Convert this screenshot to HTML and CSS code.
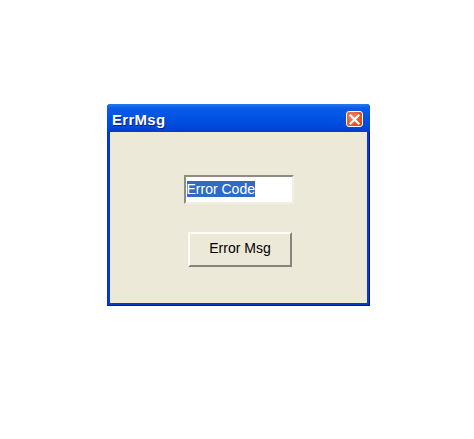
FILE: index.html
```html
<!DOCTYPE html>
<html lang="en">
<head>
  <meta charset="UTF-8">
  <meta name="viewport" content="width=device-width, initial-scale=1.0">
  <title>ErrMsg</title>
  <link rel="stylesheet" href="styles.css">
</head>
<body>
  <div class="window">
    <div class="titlebar">
      <span class="title">ErrMsg</span>
      <span class="close">
        <svg width="11" height="11" viewBox="0 0 11 11">
          <path d="M1.5 1.5 L9.5 9.5 M9.5 1.5 L1.5 9.5" stroke="#fff" stroke-width="2.2" stroke-linecap="square"/>
        </svg>
      </span>
    </div>
    <div class="client">
      <div class="field"><span class="selected">Error Code</span></div>
      <button class="btn">Error Msg</button>
    </div>
  </div>
</body>
</html>
```

FILE: styles.css
```css
body {
  margin: 0;
  padding: 104px 0 0 107px;
  background: #fff;
  font-family: "Liberation Sans", Arial, sans-serif;
}
.window {
  width: 263px;
  height: 202px;
  display: flex;
  flex-direction: column;
  background: #0838cf;
  border-radius: 4px 4px 0 0;
  box-sizing: border-box;
  padding: 0 3px 3px 3px;
  box-shadow: inset 0 -1px 0 #001a9a, inset 1px 0 0 #0a2fb8, inset -1px 0 0 #001a9a;
}
.titlebar {
  height: 28px;
  display: flex;
  align-items: center;
  justify-content: space-between;
  margin: 0 -3px;
  padding-left: 5px;
  padding-right: 7px;
  border-radius: 4px 4px 0 0;
  background: linear-gradient(#2a78f3 0%, #0a5ce8 15%, #0052e2 50%, #0047da 85%, #0838cf 100%);
}
.title {
  color: #fff;
  font-weight: bold;
  font-size: 15px;
  letter-spacing: 0.3px;
  text-shadow: 1px 1px 0 #0a1f7a;
  padding-top: 2px;
}
.close {
  width: 17px;
  height: 16px;
  box-sizing: border-box;
  border: 1px solid #fff;
  border-radius: 3px;
  background: radial-gradient(circle at 35% 35%, #ef8a63, #dd4f22 70%, #c8421c);
  display: flex;
  align-items: center;
  justify-content: center;
  margin-top: 2px;
}
.client {
  flex: 1;
  background: #ece9d8;
  display: flex;
  flex-direction: column;
  align-items: center;
  padding-top: 43px;
}
.field {
  width: 110px;
  height: 29px;
  box-sizing: border-box;
  background: #fff;
  border-style: solid;
  border-width: 2px;
  border-color: #8d8b82 #f1efe4 #f1efe4 #8d8b82;
  padding: 3px 0 0 1px;
  font-size: 14px;
  line-height: 18px;
}
.selected {
  background: #316ac5;
  color: #fff;
}
.btn {
  margin-top: 28px;
  margin-left: 3px;
  width: 104px;
  height: 35px;
  background: #ece9d8;
  border-style: solid;
  border-width: 2px;
  border-color: #fdfdf9 #85837a #85837a #fdfdf9;
  font-family: "Liberation Sans", Arial, sans-serif;
  font-size: 14px;
  color: #000;
  padding: 0 0 3px 0;
}
```
